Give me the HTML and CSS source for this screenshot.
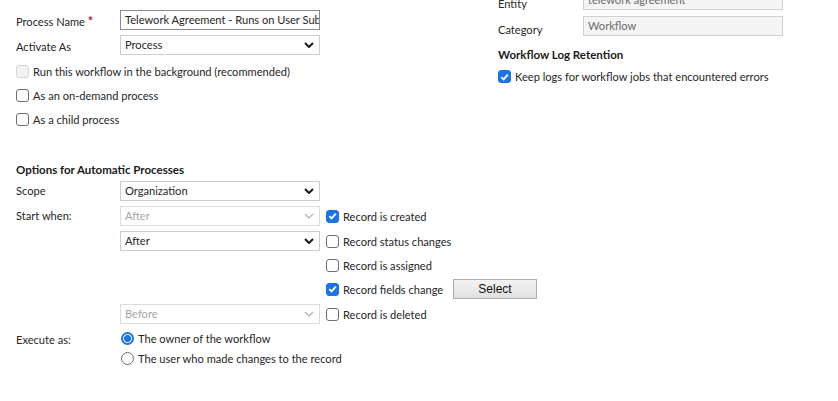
FILE: index.html
```html
<!DOCTYPE html>
<html>
<head>
<meta charset="utf-8">
<link rel="stylesheet" href="styles.css">
</head>
<body>
<div class="page">
  <div class="left">
    <div class="row first">
      <div class="label">Process Name <span class="req">*</span></div>
      <div class="input">Telework Agreement - Runs on User Sub</div>
    </div>
    <div class="row second">
      <div class="label">Activate As</div>
      <div class="select"><span>Process</span><svg class="chev" viewBox="0 0 10 6"><polyline points="1,1 5,5 9,1"/></svg></div>
    </div>
    <div class="checks">
      <div class="check disabled"><span class="box"></span><span>Run this workflow in the background (recommended)</span></div>
      <div class="check"><span class="box"></span><span>As an on-demand process</span></div>
      <div class="check"><span class="box"></span><span>As a child process</span></div>
    </div>
    <div class="heading auto">Options for Automatic Processes</div>
    <div class="trigger">
      <div class="label">Scope</div>
      <div class="select"><span>Organization</span><svg class="chev" viewBox="0 0 10 6"><polyline points="1,1 5,5 9,1"/></svg></div>
      <div></div>

      <div class="label">Start when:</div>
      <div class="select disabled"><span>After</span><svg class="chev" viewBox="0 0 10 6"><polyline points="1,1 5,5 9,1"/></svg></div>
      <div class="check"><span class="box on"><svg viewBox="0 0 12 12"><polyline points="2.5,6.2 5,8.6 9.6,3.4"/></svg></span><span>Record is created</span></div>

      <div></div>
      <div class="select"><span>After</span><svg class="chev" viewBox="0 0 10 6"><polyline points="1,1 5,5 9,1"/></svg></div>
      <div class="check"><span class="box"></span><span>Record status changes</span></div>

      <div></div>
      <div></div>
      <div class="check"><span class="box"></span><span>Record is assigned</span></div>

      <div></div>
      <div></div>
      <div class="check"><span class="box on"><svg viewBox="0 0 12 12"><polyline points="2.5,6.2 5,8.6 9.6,3.4"/></svg></span><span class="fc">Record fields change</span><button class="btn">Select</button></div>

      <div></div>
      <div class="select disabled"><span>Before</span><svg class="chev" viewBox="0 0 10 6"><polyline points="1,1 5,5 9,1"/></svg></div>
      <div class="check"><span class="box"></span><span>Record is deleted</span></div>
    </div>
    <div class="exec">
      <div class="label">Execute as:</div>
      <div class="radios">
        <div class="radio"><span class="dot on"></span><span>The owner of the workflow</span></div>
        <div class="radio"><span class="dot"></span><span>The user who made changes to the record</span></div>
      </div>
    </div>
  </div>
  <div class="right">
    <div class="rrow">
      <div class="rlabel">Entity</div>
      <div class="input ro">telework agreement</div>
    </div>
    <div class="rrow">
      <div class="rlabel">Category</div>
      <div class="input ro">Workflow</div>
    </div>
    <div class="heading log">Workflow Log Retention</div>
    <div class="check"><span class="box on"><svg viewBox="0 0 12 12"><polyline points="2.5,6.2 5,8.6 9.6,3.4"/></svg></span><span>Keep logs for workflow jobs that encountered errors</span></div>
  </div>
</div>
</body>
</html>
```

FILE: styles.css
```css
html, body {
  margin: 0;
  padding: 0;
  background: #ffffff;
}
body {
  font-family: Lato, "Open Sans", sans-serif;
  font-size: 11.1px;
  color: #262626;
  overflow: hidden;
  width: 838px;
  height: 401px;
}
.page {
  display: flex;
  align-items: flex-start;
}
.left {
  width: 498px;
  flex: none;
  padding-left: 16px;
  box-sizing: border-box;
}
.right {
  width: 320px;
  margin-top: -10px;
}
.row {
  display: flex;
  align-items: flex-start;
  height: 20px;
}
.row.first { margin-top: 10px; }
.row.second { margin-top: 5px; }
.row .label { padding-top: 4px; }
.label {
  width: 104px;
  flex: none;
  line-height: 16px;
}
.req {
  color: #a4262c;
  font-size: 13px;
  font-weight: bold;
  line-height: 10px;
}
.input {
  width: 200px;
  height: 20px;
  box-sizing: border-box;
  border: 1px solid #8a8a8a;
  padding: 0 4px;
  line-height: 18px;
  white-space: nowrap;
  overflow: hidden;
  color: #262626;
}
.input.ro {
  background: #f4f4f4;
  border-color: #d0d0d0;
  color: #6a6a6a;
}
.select {
  width: 200px;
  height: 20px;
  box-sizing: border-box;
  border: 1px solid #cdcdcd;
  padding: 0 5px 0 4px;
  display: flex;
  align-items: center;
  justify-content: space-between;
  line-height: 18px;
}
.chev {
  width: 10px;
  height: 6px;
  fill: none;
  stroke: #1a1a1a;
  stroke-width: 2;
}
.select.disabled {
  color: #a6a6a6;
  border-color: #dcdcdc;
}
.select.disabled .chev {
  stroke: #b5b5b5;
  stroke-width: 1.3;
}
.checks {
  margin-top: 10px;
  display: flex;
  flex-direction: column;
  gap: 11px;
}
.check {
  display: flex;
  align-items: center;
  gap: 4px;
  height: 13px;
  line-height: 13px;
  white-space: nowrap;
}
.box {
  width: 13px;
  height: 13px;
  box-sizing: border-box;
  border: 1px solid #6e6e6e;
  border-radius: 3px;
  flex: none;
  display: flex;
  align-items: center;
  justify-content: center;
  background: #fff;
}
.check.disabled .box {
  border-color: #d6d6d6;
  background: #f2f2f2;
}
.box.on {
  background: #1a73e8;
  border-color: #1a73e8;
}
.box.on svg {
  width: 12px;
  height: 12px;
  fill: none;
  stroke: #ffffff;
  stroke-width: 2;
}
.heading {
  font-weight: bold;
  font-size: 11.5px;
  color: #1a1a1a;
}
.heading.auto {
  margin-top: 36px;
  line-height: 16px;
}
.trigger {
  margin-top: 3px;
  display: grid;
  grid-template-columns: 104px 206px auto;
  grid-template-rows: 25px 25px 24px 24px 25px 20px;
  align-items: start;
}
.trigger .label { line-height: 20px; }
.trigger .label + .select.disabled { }
.trigger .check { height: 20px; }
.fc { width: 106px; }
.btn {
  width: 84px;
  height: 20px;
  border: 1px solid #adadad;
  background: linear-gradient(#f3f3f3, #e0e0e0);
  font-family: "Liberation Sans", Arial, sans-serif;
  font-size: 12px;
  color: #111;
  padding: 0;
}
.exec {
  display: flex;
  margin-top: 7px;
}
.exec .label { padding-top: 1px; }
.radios {
  display: flex;
  flex-direction: column;
  gap: 6px;
  margin-left: 1px;
}
.radio {
  display: flex;
  align-items: center;
  gap: 4px;
  height: 14px;
  white-space: nowrap;
}
.dot {
  width: 13px;
  height: 13px;
  box-sizing: border-box;
  border: 1px solid #6e6e6e;
  border-radius: 50%;
  flex: none;
  background: #fff;
}
.dot.on {
  border: 2px solid #1a73e8;
  background: radial-gradient(circle, #1a73e8 0 3.2px, #fff 3.8px);
}
.rrow {
  display: flex;
  height: 20px;
  margin-bottom: 6px;
}
.rlabel {
  width: 85px;
  flex: none;
  line-height: 16px;
  padding-top: 6px;
}
.heading.log {
  margin-top: 11px;
  line-height: 16px;
}
.right .check {
  margin-top: 7px;
}
```
